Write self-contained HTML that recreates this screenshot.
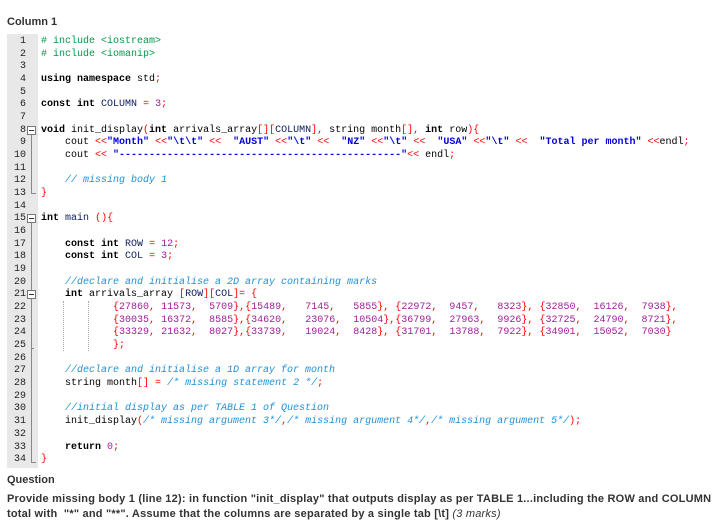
<!DOCTYPE html>
<html><head><meta charset="utf-8"><style>
body{margin:0;width:721px;height:529px;background:#fff;position:relative;overflow:hidden;font-family:"Liberation Sans",sans-serif;}
.h{position:absolute;left:7px;font-weight:bold;font-size:11px;color:#333;}
.gut{position:absolute;left:7px;top:34px;width:31px;height:434px;background:#e8e8e8;}
.nums{position:absolute;left:7px;top:36px;width:19px;text-align:right;font:10px/12.67px "Liberation Mono",monospace;color:#222;margin:0;}
pre.code{position:absolute;left:41px;top:36px;margin:0;font:10px/12.67px "Liberation Mono",monospace;color:#000;white-space:pre;}
.k{font-weight:bold;color:#000;}
.o{color:#f00;}
.n{color:#a0209a;}
.s{color:#0000e0;font-weight:bold;}
.c{color:#1e90d8;font-style:italic;}
.p{color:#00994c;}
.i{color:#102060;}
.fold{position:absolute;border:1px solid #777;width:7px;height:7px;background:#fff;}
.fold:after{content:"";position:absolute;left:1px;top:3px;width:5px;height:1px;background:#333;}
.vl{position:absolute;width:1px;background:#888;}
.end{position:absolute;width:4px;height:5px;border-left:1px solid #888;border-bottom:1px solid #888;}
.dl{position:absolute;width:0;border-left:1px dotted #aaa;}
.q{position:absolute;left:7px;font-size:11px;font-weight:bold;color:#333;white-space:nowrap;}
</style></head><body>
<div class="h" style="top:16px">Column 1</div>
<div class="gut"></div>
<pre class="nums">1
2
3
4
5
6
7
8
9
10
11
12
13
14
15
16
17
18
19
20
21
22
23
24
25
26
27
28
29
30
31
32
33
34</pre>
<div class="fold" style="left:27px;top:126px"></div>
<div class="vl" style="left:31px;top:135px;height:55px"></div>
<div class="end" style="left:31px;top:188px"></div>
<div class="fold" style="left:27px;top:214px"></div>
<div class="vl" style="left:31px;top:223px;height:236px"></div>
<div class="end" style="left:31px;top:457px"></div>
<div class="fold" style="left:27px;top:290px"></div>
<div class="vl" style="left:31px;top:299px;height:50px"></div>
<div style="position:absolute;left:31px;top:348px;width:3px;height:1px;background:#888"></div>
<div class="dl" style="left:63px;top:301px;height:50px"></div>
<div class="dl" style="left:88px;top:301px;height:50px"></div>
<pre class="code"><span class="p"># include &lt;iostream&gt;</span>
<span class="p"># include &lt;iomanip&gt;</span>

<span class="k">using namespace</span> std<span class="o">;</span>

<span class="k">const int</span> <span class="i">COLUMN</span> <span class="o">=</span> <span class="n">3</span><span class="o">;</span>

<span class="k">void</span> init_display<span class="o">(</span><span class="k">int</span> arrivals_array<span class="o">[][</span><span class="i">COLUMN</span><span class="o">],</span> string month<span class="o">[],</span> <span class="k">int</span> row<span class="o">){</span>
    cout <span class="o">&lt;&lt;</span><span class="s">"Month"</span> <span class="o">&lt;&lt;</span><span class="s">"\t\t"</span> <span class="o">&lt;&lt;</span>  <span class="s">"AUST"</span> <span class="o">&lt;&lt;</span><span class="s">"\t"</span> <span class="o">&lt;&lt;</span>  <span class="s">"NZ"</span> <span class="o">&lt;&lt;</span><span class="s">"\t"</span> <span class="o">&lt;&lt;</span>  <span class="s">"USA"</span> <span class="o">&lt;&lt;</span><span class="s">"\t"</span> <span class="o">&lt;&lt;</span>  <span class="s">"Total per month"</span> <span class="o">&lt;&lt;</span>endl<span class="o">;</span>
    cout <span class="o">&lt;&lt;</span> <span class="s">"-----------------------------------------------"</span><span class="o">&lt;&lt;</span> endl<span class="o">;</span>

    <span class="c">// missing body 1</span>
<span class="o">}</span>

<span class="k">int</span> <span class="i">main</span> <span class="o">(){</span>

    <span class="k">const int</span> <span class="i">ROW</span> <span class="o">=</span> <span class="n">12</span><span class="o">;</span>
    <span class="k">const int</span> <span class="i">COL</span> <span class="o">=</span> <span class="n">3</span><span class="o">;</span>

    <span class="c">//declare and initialise a 2D array containing marks</span>
    <span class="k">int</span> arrivals_array <span class="o">[</span><span class="i">ROW</span><span class="o">][</span><span class="i">COL</span><span class="o">]=</span> <span class="o">{</span>
            <span class="o">{</span><span class="n">27860</span><span class="o">,</span> <span class="n">11573</span><span class="o">,</span>  <span class="n">5709</span><span class="o">},{</span><span class="n">15489</span><span class="o">,</span>   <span class="n">7145</span><span class="o">,</span>   <span class="n">5855</span><span class="o">},</span> <span class="o">{</span><span class="n">22972</span><span class="o">,</span>  <span class="n">9457</span><span class="o">,</span>   <span class="n">8323</span><span class="o">},</span> <span class="o">{</span><span class="n">32850</span><span class="o">,</span>  <span class="n">16126</span><span class="o">,</span>  <span class="n">7938</span><span class="o">},</span>
            <span class="o">{</span><span class="n">30035</span><span class="o">,</span> <span class="n">16372</span><span class="o">,</span>  <span class="n">8585</span><span class="o">},{</span><span class="n">34620</span><span class="o">,</span>   <span class="n">23076</span><span class="o">,</span>  <span class="n">10504</span><span class="o">},{</span><span class="n">36799</span><span class="o">,</span>  <span class="n">27963</span><span class="o">,</span>  <span class="n">9926</span><span class="o">},</span> <span class="o">{</span><span class="n">32725</span><span class="o">,</span>  <span class="n">24790</span><span class="o">,</span>  <span class="n">8721</span><span class="o">},</span>
            <span class="o">{</span><span class="n">33329</span><span class="o">,</span> <span class="n">21632</span><span class="o">,</span>  <span class="n">8027</span><span class="o">},{</span><span class="n">33739</span><span class="o">,</span>   <span class="n">19024</span><span class="o">,</span>  <span class="n">8428</span><span class="o">},</span> <span class="o">{</span><span class="n">31701</span><span class="o">,</span>  <span class="n">13788</span><span class="o">,</span>  <span class="n">7922</span><span class="o">},</span> <span class="o">{</span><span class="n">34901</span><span class="o">,</span>  <span class="n">15052</span><span class="o">,</span>  <span class="n">7030</span><span class="o">}</span>
            <span class="o">};</span>

    <span class="c">//declare and initialise a 1D array for month</span>
    string month<span class="o">[]</span> <span class="o">=</span> <span class="c">/* missing statement 2 */</span><span class="o">;</span>

    <span class="c">//initial display as per TABLE 1 of Question</span>
    init_display<span class="o">(</span><span class="c">/* missing argument 3*/</span><span class="o">,</span><span class="c">/* missing argument 4*/</span><span class="o">,</span><span class="c">/* missing argument 5*/</span><span class="o">);</span>

    <span class="k">return</span> <span class="n">0</span><span class="o">;</span>
<span class="o">}</span></pre>
<div class="q" style="top:474px">Question</div>
<div class="q" style="top:493px;letter-spacing:0.21px">Provide missing body 1 (line 12): in function "init_display" that outputs display as per TABLE 1...including the ROW and COLUMN</div>
<div class="q" style="top:508px;letter-spacing:0.21px">total with &nbsp;"*" and "**". Assume that the columns are separated by a single tab [\t] <span style="font-weight:normal;font-style:italic">(3 marks)</span></div>
</body></html>
